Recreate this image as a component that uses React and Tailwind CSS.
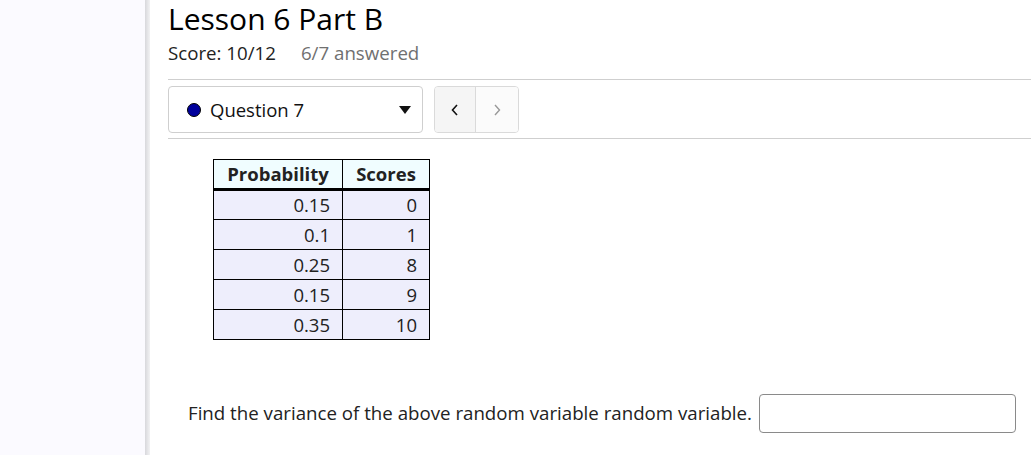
export default function App() {
  const rows = [
    ["0.15", "0"],
    ["0.1", "1"],
    ["0.25", "8"],
    ["0.15", "9"],
    ["0.35", "10"],
  ];

  return (
    <div
      className="flex w-[1031px] h-[455px] overflow-hidden bg-white text-[#222]"
      style={{ fontFamily: '"Open Sans", sans-serif' }}
    >
      {/* left rail */}
      <div className="w-[145px] shrink-0 bg-[#fbfaff]" />
      <div className="w-[5px] shrink-0 bg-gradient-to-r from-[#d8d8dc] to-[#f2f2f4]" />

      {/* main */}
      <div className="flex-1 pl-[18px]">
        <h1 className="text-[30px] leading-[34px] pt-[2px] text-black">Lesson 6 Part B</h1>
        <div className="flex items-center gap-[25px] mt-[4px] text-[18.7px] leading-[26px]">
          <span className="text-[#222]">Score: 10/12</span>
          <span className="text-[#707070]">6/7 answered</span>
        </div>

        <div className="mt-[13px] border-t border-[#cfcfcf]" />

        <div className="flex items-center gap-[11px] pt-[6px] pb-[5px]">
          <div className="w-[255px] h-[47px] border border-[#cfcfcf] rounded-[4px] flex items-center pl-[18px] pr-[11px]">
            <span className="w-[14px] h-[14px] rounded-full bg-[#00009c] border border-black mr-[9px]" />
            <span className="text-[18.5px] text-[#111] flex-1">Question 7</span>
            <svg width="12" height="8" viewBox="0 0 12 8">
              <path d="M0 0 L12 0 L6 8 Z" fill="#111" />
            </svg>
          </div>
          <div className="flex h-[47px] border border-[#dadada] rounded-[4px] overflow-hidden">
            <button className="w-[41px] h-full bg-[#f5f5f5] border-r border-[#dadada] flex items-center justify-center">
              <svg width="8" height="12" viewBox="0 0 8 12">
                <path d="M6 1 L1.5 6 L6 11" fill="none" stroke="#111" strokeWidth="1.6" />
              </svg>
            </button>
            <button className="w-[42px] h-full bg-[#fbfbfb] flex items-center justify-center">
              <svg width="8" height="12" viewBox="0 0 8 12">
                <path d="M2 1 L6.5 6 L2 11" fill="none" stroke="#999" strokeWidth="1.4" />
              </svg>
            </button>
          </div>
        </div>

        <div className="border-t border-[#cfcfcf]" />

        <div className="pl-[45px] pt-[20px]">
          <table className="border-collapse text-[18.5px] text-[#222]">
            <thead>
              <tr className="bg-[#f0fdff]">
                <th className="w-[129px] h-[30px] border border-black border-b-[3px] font-bold text-center px-1 leading-[24px]">
                  Probability
                </th>
                <th className="w-[87px] h-[30px] border border-black border-b-[3px] font-bold text-center px-1 leading-[24px]">
                  Scores
                </th>
              </tr>
            </thead>
            <tbody>
              {rows.map(([p, s], i) => (
                <tr key={i} className="bg-[#eeeefc]">
                  <td className="h-[30px] border border-black text-right pr-[12px] leading-[24px]">{p}</td>
                  <td className="h-[30px] border border-black text-right pr-[12px] leading-[24px]">{s}</td>
                </tr>
              ))}
            </tbody>
          </table>
        </div>

        <div className="flex items-center pl-[20px] mt-[54px]">
          <span className="text-[18.7px] text-[#222]">
            Find the variance of the above random variable random variable.
          </span>
          <div className="ml-[7px] w-[257px] h-[39px] border border-[#8a8a8a] rounded-[4px] bg-white" />
        </div>
      </div>
    </div>
  );
}
